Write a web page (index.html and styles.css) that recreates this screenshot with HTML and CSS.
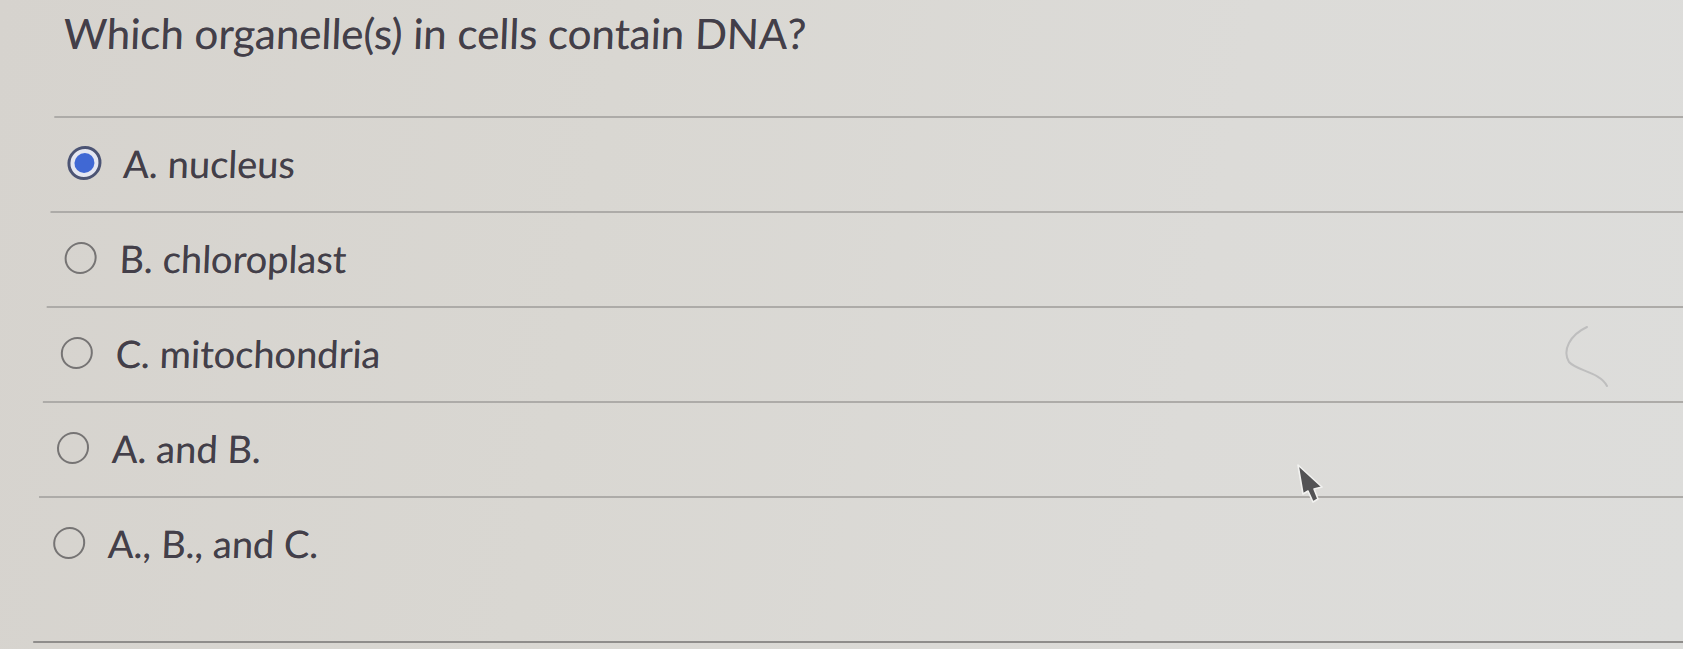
FILE: index.html
```html
<!DOCTYPE html>
<html lang="en">
<head>
<meta charset="utf-8">
<title>Which organelle(s) in cells contain DNA?</title>
<link rel="stylesheet" href="styles.css">
</head>
<body>
<div class="screen">
  <div class="sheet">
    <div class="question">
      <h1 class="title">Which organelle(s) in cells contain DNA?</h1>
    </div>
    <ul class="options">
      <li class="option">
        <span class="radio radio-on"><span class="dot"></span></span>
        <span class="label">A. nucleus</span>
      </li>
      <li class="option">
        <span class="radio"></span>
        <span class="label">B. chloroplast</span>
      </li>
      <li class="option">
        <span class="radio"></span>
        <span class="label">C. mitochondria</span>
      </li>
      <li class="option">
        <span class="radio"></span>
        <span class="label">A. and B.</span>
      </li>
      <li class="option">
        <span class="radio"></span>
        <span class="label">A., B., and C.</span>
      </li>
    </ul>
  </div>
  <svg class="smudge" width="1683" height="649" viewBox="0 0 1683 649" aria-hidden="true">
    <path d="M1587 327 C1570 335 1562 350 1569 362 C1577 371 1600 372 1607 386" fill="none" stroke="#b0b0b2" stroke-width="2" stroke-linecap="round" opacity="0.7"/>
  </svg>
  <svg class="cursor" width="30" height="44" viewBox="-3 -3 30 44" aria-hidden="true">
    <path d="M0 0 L5 29 L10 26 L15 37 L20 34 L16 24 L24 22 Z" fill="#535355" stroke="#f2f2f0" stroke-width="1.6" stroke-linejoin="round"/>
  </svg>
</div>
</body>
</html>
```

FILE: styles.css
```css
html, body {
  margin: 0;
  padding: 0;
}

body {
  width: 1683px;
  height: 649px;
  overflow: hidden;
  font-family: Lato, "Open Sans", "Liberation Sans", sans-serif;
  color: #433f49;
  background: linear-gradient(100deg, #d6d3ce 0%, #d9d7d2 35%, #dcdbd8 70%, #dddddb 100%);
}

.screen {
  position: relative;
  width: 1683px;
  height: 649px;
  overflow: hidden;
}

.sheet {
  width: 1800px;
  padding-left: 59px;
  transform: skewX(-2.3deg);
  transform-origin: 0 0;
}

.question {
  height: 116px;
  box-sizing: border-box;
  padding-top: 8px;
}

.title {
  margin: 0 0 0 6px;
  font-size: 42px;
  line-height: 50px;
  font-weight: 400;
  text-shadow: 0 0 0.5px rgba(67, 63, 73, 0.6);
}

.options {
  list-style: none;
  margin: 0;
  padding: 0 0 50px 0;
  border-bottom: 2px solid #8f8d8b;
}

.option {
  height: 95px;
  box-sizing: border-box;
  border-top: 2px solid #adaba8;
  display: flex;
  align-items: center;
  gap: 23px;
  padding-left: 16px;
  padding-bottom: 4px;
}

.radio {
  width: 32px;
  height: 32px;
  box-sizing: border-box;
  border: 2.5px solid #767474;
  border-radius: 50%;
  flex: none;
  display: flex;
  align-items: center;
  justify-content: center;
}

.radio-on {
  width: 34px;
  height: 34px;
  margin-left: -1px;
  margin-right: -1px;
  border: 3px solid #4c5474;
  background: #e4e6f1;
}

.dot {
  width: 20px;
  height: 20px;
  border-radius: 50%;
  background: #4068d4;
}

.label {
  font-size: 38px;
  line-height: 44px;
  font-weight: 400;
  text-shadow: 0 0 0.5px rgba(67, 63, 73, 0.6);
}

.smudge {
  position: absolute;
  left: 0;
  top: 0;
  pointer-events: none;
}

.cursor {
  position: absolute;
  left: 1295px;
  top: 462px;
}
```
